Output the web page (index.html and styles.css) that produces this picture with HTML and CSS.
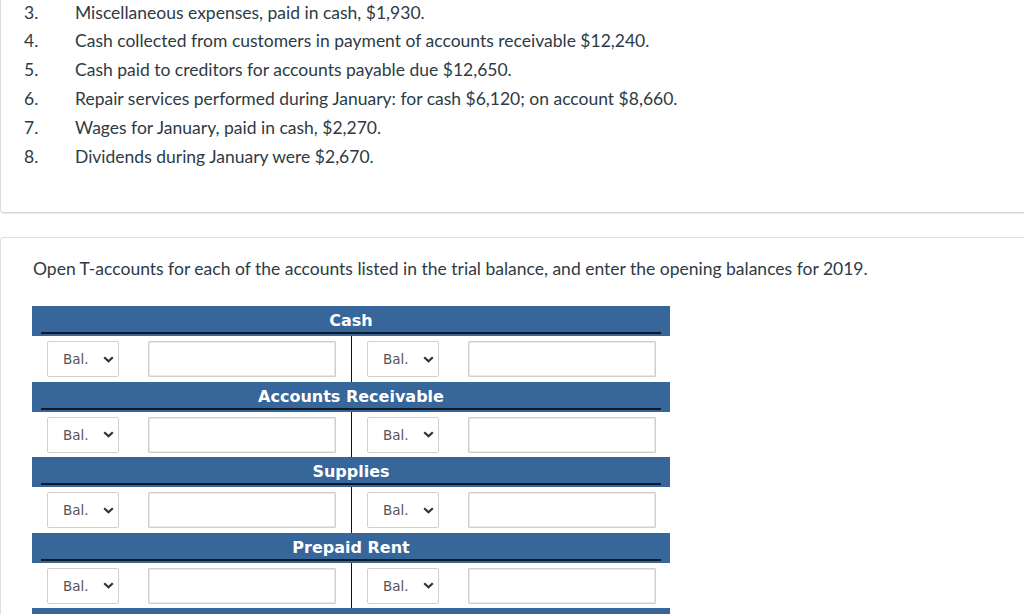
FILE: index.html
```html
<!DOCTYPE html>
<html>
<head>
<meta charset="utf-8">
<link rel="stylesheet" href="styles.css">
</head>
<body>
<div class="card card-top">
  <div class="list">
    <div class="item"><span class="num">3.</span><span class="txt">Miscellaneous expenses, paid in cash, $1,930.</span></div>
    <div class="item"><span class="num">4.</span><span class="txt">Cash collected from customers in payment of accounts receivable $12,240.</span></div>
    <div class="item"><span class="num">5.</span><span class="txt">Cash paid to creditors for accounts payable due $12,650.</span></div>
    <div class="item"><span class="num">6.</span><span class="txt">Repair services performed during January: for cash $6,120; on account $8,660.</span></div>
    <div class="item"><span class="num">7.</span><span class="txt">Wages for January, paid in cash, $2,270.</span></div>
    <div class="item"><span class="num">8.</span><span class="txt">Dividends during January were $2,670.</span></div>
  </div>
</div>
<div class="card card-main">
  <p class="prompt">Open T-accounts for each of the accounts listed in the trial balance, and enter the opening balances for 2019.</p>
  <div class="taccounts">
    <div class="acct">
      <div class="head"><div class="title">Cash</div><div class="rule"></div></div>
      <div class="row">
        <div class="side left">
          <div class="sel"><span>Bal.</span><svg width="11" height="7" viewBox="0 0 11 7"><polyline points="1.2,1.2 5.5,5.3 9.8,1.2" fill="none" stroke="#333" stroke-width="2.2"/></svg></div>
          <input class="amt" type="text">
        </div>
        <div class="side right">
          <div class="sel"><span>Bal.</span><svg width="11" height="7" viewBox="0 0 11 7"><polyline points="1.2,1.2 5.5,5.3 9.8,1.2" fill="none" stroke="#333" stroke-width="2.2"/></svg></div>
          <input class="amt" type="text">
        </div>
      </div>
    </div>
    <div class="acct">
      <div class="head"><div class="title">Accounts Receivable</div><div class="rule"></div></div>
      <div class="row">
        <div class="side left">
          <div class="sel"><span>Bal.</span><svg width="11" height="7" viewBox="0 0 11 7"><polyline points="1.2,1.2 5.5,5.3 9.8,1.2" fill="none" stroke="#333" stroke-width="2.2"/></svg></div>
          <input class="amt" type="text">
        </div>
        <div class="side right">
          <div class="sel"><span>Bal.</span><svg width="11" height="7" viewBox="0 0 11 7"><polyline points="1.2,1.2 5.5,5.3 9.8,1.2" fill="none" stroke="#333" stroke-width="2.2"/></svg></div>
          <input class="amt" type="text">
        </div>
      </div>
    </div>
    <div class="acct">
      <div class="head"><div class="title">Supplies</div><div class="rule"></div></div>
      <div class="row">
        <div class="side left">
          <div class="sel"><span>Bal.</span><svg width="11" height="7" viewBox="0 0 11 7"><polyline points="1.2,1.2 5.5,5.3 9.8,1.2" fill="none" stroke="#333" stroke-width="2.2"/></svg></div>
          <input class="amt" type="text">
        </div>
        <div class="side right">
          <div class="sel"><span>Bal.</span><svg width="11" height="7" viewBox="0 0 11 7"><polyline points="1.2,1.2 5.5,5.3 9.8,1.2" fill="none" stroke="#333" stroke-width="2.2"/></svg></div>
          <input class="amt" type="text">
        </div>
      </div>
    </div>
    <div class="acct">
      <div class="head"><div class="title">Prepaid Rent</div><div class="rule"></div></div>
      <div class="row">
        <div class="side left">
          <div class="sel"><span>Bal.</span><svg width="11" height="7" viewBox="0 0 11 7"><polyline points="1.2,1.2 5.5,5.3 9.8,1.2" fill="none" stroke="#333" stroke-width="2.2"/></svg></div>
          <input class="amt" type="text">
        </div>
        <div class="side right">
          <div class="sel"><span>Bal.</span><svg width="11" height="7" viewBox="0 0 11 7"><polyline points="1.2,1.2 5.5,5.3 9.8,1.2" fill="none" stroke="#333" stroke-width="2.2"/></svg></div>
          <input class="amt" type="text">
        </div>
      </div>
    </div>
    <div class="acct">
      <div class="head"></div>
    </div>
  </div>
</div>
</body>
</html>
```

FILE: styles.css
```css
html, body {
  margin: 0;
  padding: 0;
  background: #ffffff;
  overflow: hidden;
}
body {
  font-family: Lato, "Liberation Sans", sans-serif;
  color: #2d3b45;
  font-size: 17.5px;
}
.card {
  width: calc(100% + 20px);
  box-sizing: border-box;
}
.card-top {
  border-left: 1px solid #dcdcdc;
  border-bottom: 1px solid #d6d6d6;
  border-bottom-left-radius: 4px;
  box-shadow: 0 1px 0 #ececec;
  padding-bottom: 41px;
}
.list {
  margin-top: -1.4px;
}
.item {
  display: flex;
  line-height: 28.8px;
  padding-left: 23px;
}
.num {
  width: 51px;
  flex: none;
}
.card-main {
  margin-top: 24px;
  border-left: 1px solid #dedede;
  border-top: 1px solid #dedede;
  border-top-left-radius: 4px;
}
.prompt {
  margin: 0;
  padding: 19px 0 0 32px;
  line-height: 24px;
}
.taccounts {
  margin: 25px 0 0 31px;
  width: 638px;
}
.head {
  background: #37669a;
  height: 30px;
  padding: 0 9px;
  box-sizing: border-box;
}
.title {
  height: 26px;
  line-height: 29px;
  text-align: center;
  color: #ffffff;
  font-family: "DejaVu Sans", Verdana, sans-serif;
  font-weight: bold;
  font-size: 16px;
}
.rule {
  height: 2px;
  background: #111a24;
}
.row {
  display: flex;
  height: 45.5px;
}
.side {
  display: flex;
  align-items: flex-start;
  padding-top: 5px;
  box-sizing: border-box;
  gap: 29px;
}
.left {
  width: 320px;
  padding-left: 15px;
  border-right: 1px solid #111;
}
.right {
  width: 318px;
  padding-left: 15px;
}
.sel {
  width: 72px;
  height: 36px;
  box-sizing: border-box;
  border: 1px solid #d0d0d0;
  border-radius: 2px;
  display: flex;
  align-items: center;
  justify-content: space-between;
  padding: 0 4px 0 15px;
  font-family: "DejaVu Sans", Verdana, sans-serif;
  font-size: 13.5px;
  color: #555;
}
.sel svg {
  display: block;
}
.amt {
  width: 188px;
  height: 36px;
  box-sizing: border-box;
  border: 1px solid #cfcfcf;
  box-shadow: inset 0 0 0 1px #e9e9e9;
  border-radius: 1px;
  margin: 0;
  padding: 0 6px;
  background: #fff;
  outline: none;
}
```
